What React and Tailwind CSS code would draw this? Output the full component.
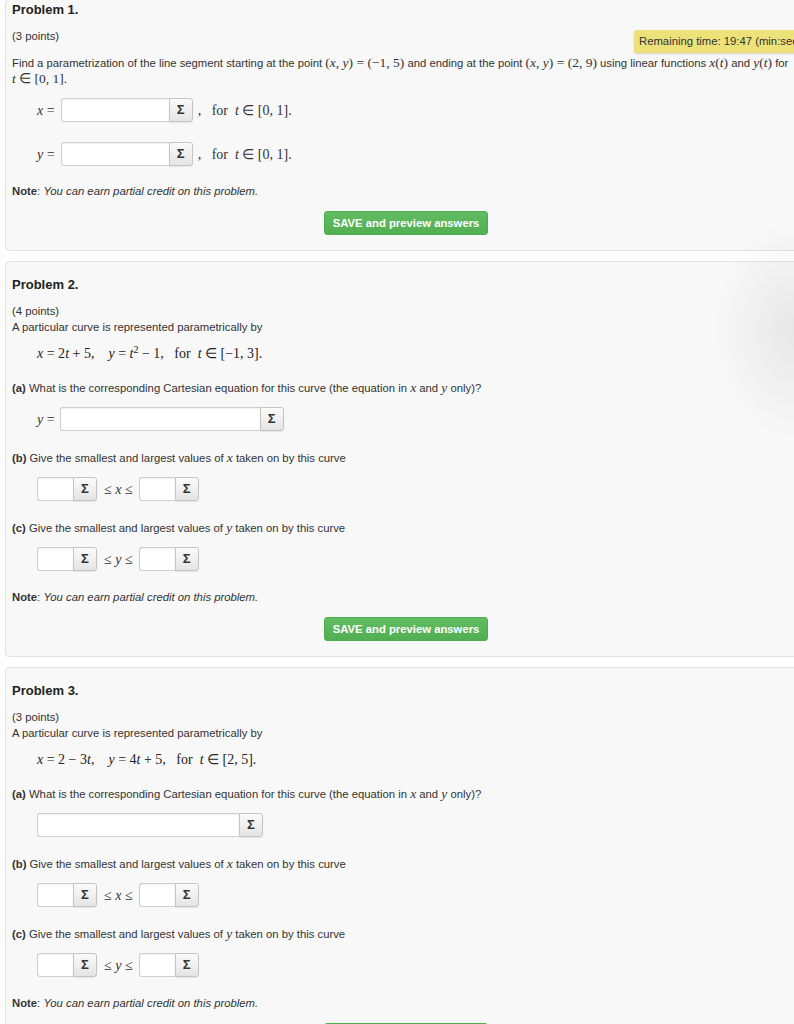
import React from "react";

const serif = "font-['Liberation_Serif',serif]";

function V({ children }) {
  return <i className="italic">{children}</i>;
}

function M({ children }) {
  return <span className={`${serif} text-[13.5px]`}>{children}</span>;
}

function Sigma() {
  return (
    <div className="flex h-full w-[24px] items-center justify-center rounded-r-[3px] border border-[#c4c4c4] bg-gradient-to-b from-[#fbfbfb] to-[#e4e4e4] text-[13px] font-bold text-[#333] shadow-[0_1px_1px_rgba(0,0,0,0.08)]">
      Σ
    </div>
  );
}

function Field({ w }) {
  return (
    <div className="flex h-[24px]">
      <div
        className="h-full rounded-l-[3px] border border-r-0 border-[#cfcfcf] bg-white shadow-[inset_0_1px_1px_rgba(0,0,0,0.06)]"
        style={{ width: w }}
      />
      <Sigma />
    </div>
  );
}

function SaveBtn({ mt }) {
  return (
    <div className={`flex pl-[312px] ${mt}`}>
      <div className="flex h-[24px] w-[164px] items-center justify-center rounded-[3px] border border-[#4cae4c] bg-gradient-to-b from-[#62bd62] to-[#52ae52] text-[11.3px] font-bold text-white">
        SAVE and preview answers
      </div>
    </div>
  );
}

function Note({ mt }) {
  return (
    <div className={`h-[16px] text-[11.3px] leading-[16px] ${mt}`}>
      <b className="font-bold">Note</b>: <i className="italic">You can earn partial credit on this problem.</i>
    </div>
  );
}

function RangeRow({ v, mt }) {
  return (
    <div className={`flex items-center pl-[25px] ${mt}`}>
      <Field w={36} />
      <span className={`${serif} ml-[7px] mr-[6px] text-[14px] text-[#333]`}>
        ≤ <V>{v}</V> ≤
      </span>
      <Field w={36} />
    </div>
  );
}

function Line({ children, mt = "" }) {
  return <div className={`h-[16px] text-[11.3px] leading-[16px] whitespace-nowrap ${mt}`}>{children}</div>;
}

function Title({ children }) {
  return <div className="h-[16px] text-[13px] font-bold leading-[16px] text-[#222]">{children}</div>;
}

function Panel({ children, className = "" }) {
  return (
    <div
      className={`relative ml-[5px] w-[812px] rounded-[4px] border border-[#e3e3e3] bg-[#f8f8f8] pl-[6px] ${className}`}
    >
      {children}
    </div>
  );
}

function ParamProblem({ num, pts, eq, aLabel, aWidth, top }) {
  return (
    <Panel className={`${top} pt-[15px] pb-[15px]`}>
      <Title>Problem {num}.</Title>
      <Line mt="mt-[10px]">({pts} points)</Line>
      <Line>A particular curve is represented parametrically by</Line>
      <div className={`${serif} mt-[10px] h-[18px] pl-[25px] text-[14px] leading-[18px] text-[#222] whitespace-nowrap`}>
        {eq}
      </div>
      <Line mt="mt-[17px]">
        <b className="font-bold">(a)</b> What is the corresponding Cartesian equation for this curve (the equation in{" "}
        <M><V>x</V></M> and <M><V>y</V></M> only)?
      </Line>
      <div className="mt-[11px] flex items-center pl-[25px]">
        {aLabel ? (
          <span className={`${serif} mr-[5px] text-[14px] text-[#333]`}>
            <V>y</V> =
          </span>
        ) : null}
        <Field w={aWidth} />
      </div>
      <Line mt="mt-[19px]">
        <b className="font-bold">(b)</b> Give the smallest and largest values of <M><V>x</V></M> taken on by this curve
      </Line>
      <RangeRow v="x" mt="mt-[11px]" />
      <Line mt="mt-[19px]">
        <b className="font-bold">(c)</b> Give the smallest and largest values of <M><V>y</V></M> taken on by this curve
      </Line>
      <RangeRow v="y" mt="mt-[11px]" />
      <Note mt="mt-[18px]" />
      <SaveBtn mt="mt-[12px]" />
    </Panel>
  );
}

export default function App() {
  return (
    <div className="relative h-[1024px] w-[794px] overflow-hidden bg-white font-['Liberation_Sans',Arial,sans-serif] text-[#333]">
      <Panel className="-mt-px pt-[2px] pb-[15px]">
        <Title>Problem 1.</Title>
        <Line mt="mt-[10px]">(3 points)</Line>
        <div className="absolute left-[628px] top-[30px] flex h-[23px] w-[190px] items-center rounded-[3px] bg-[#ede27a] pl-[5px] text-[11.3px] text-[#333] shadow-[0_1px_2px_rgba(0,0,0,0.15)] whitespace-nowrap">
          Remaining time: 19:47 (min:sec)
        </div>
        <div className="mt-[11px] text-[11.3px] leading-[16px] whitespace-nowrap">
          Find a parametrization of the line segment starting at the point{" "}
          <M>
            (<V>x</V>, <V>y</V>) = (−1, 5)
          </M>{" "}
          and ending at the point{" "}
          <M>
            (<V>x</V>, <V>y</V>) = (2, 9)
          </M>{" "}
          using linear functions{" "}
          <M>
            <V>x</V>(<V>t</V>)
          </M>{" "}
          and{" "}
          <M>
            <V>y</V>(<V>t</V>)
          </M>{" "}
          for
          <br />
          <M>
            <V>t</V> ∈ [0, 1].
          </M>
        </div>
        <div className="mt-[11px] flex items-center pl-[25px]">
          <span className={`${serif} mr-[6px] text-[14px] text-[#333]`}>
            <V>x</V> =
          </span>
          <Field w={108} />
          <span className={`${serif} ml-[5px] text-[14px] text-[#333] whitespace-nowrap`}>
            ,&nbsp;&nbsp; for&nbsp; <V>t</V> ∈ [0, 1].
          </span>
        </div>
        <div className="mt-[20px] flex items-center pl-[25px]">
          <span className={`${serif} mr-[6px] text-[14px] text-[#333]`}>
            <V>y</V> =
          </span>
          <Field w={108} />
          <span className={`${serif} ml-[5px] text-[14px] text-[#333] whitespace-nowrap`}>
            ,&nbsp;&nbsp; for&nbsp; <V>t</V> ∈ [0, 1].
          </span>
        </div>
        <Note mt="mt-[17px]" />
        <SaveBtn mt="mt-[12px]" />
      </Panel>

      <ParamProblem
        num={2}
        pts={4}
        top="mt-[10px]"
        aLabel
        aWidth={200}
        eq={
          <>
            <V>x</V> = 2<V>t</V> + 5,&nbsp;&nbsp;&nbsp; <V>y</V> = <V>t</V>
            <sup className="text-[10px]">2</sup> − 1,&nbsp;&nbsp; for&nbsp; <V>t</V> ∈ [−1, 3].
          </>
        }
      />

      <ParamProblem
        num={3}
        pts={3}
        top="mt-[10px]"
        aLabel={false}
        aWidth={202}
        eq={
          <>
            <V>x</V> = 2 − 3<V>t</V>,&nbsp;&nbsp;&nbsp; <V>y</V> = 4<V>t</V> + 5,&nbsp;&nbsp; for&nbsp; <V>t</V> ∈ [2, 5].
          </>
        }
      />

      <div className="pointer-events-none absolute right-0 top-[220px] h-[220px] w-[80px] bg-[radial-gradient(ellipse_at_right,rgba(0,0,0,0.07),rgba(0,0,0,0)_70%)]" />
    </div>
  );
}
